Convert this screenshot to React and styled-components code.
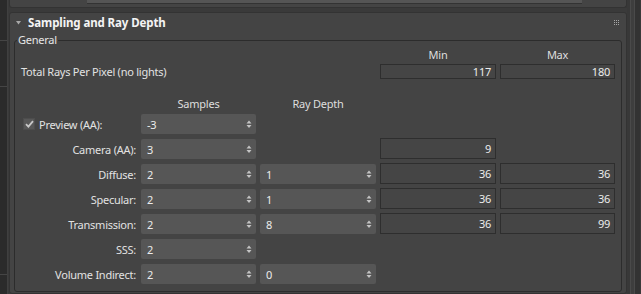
import React from "react";
import styled, { createGlobalStyle } from "styled-components";

const Global = createGlobalStyle`
  html, body { margin: 0; padding: 0; background: #3a3a3a; }
  body {
    font-family: "Noto Sans", "Open Sans", sans-serif;
    font-size: 11px;
    letter-spacing: -0.25px;
    color: #e2e2e2;
  }
  #root { width: 641px; height: 294px; }
`;

const Frame = styled.div`
  display: flex;
  width: 641px;
  height: 294px;
  overflow: hidden;
  background: #3a3a3a;
`;

const SideStrip = styled.div`
  flex: none;
  width: 7px;
  background: #2b2b2b;
  border-right: 1px solid #404040;
  display: flex;
  flex-direction: column;
`;

const SideTick = styled.div`
  height: 1px;
  margin-top: ${(p) => p.$gap}px;
  background: #454545;
`;

const Main = styled.div`
  flex: none;
  width: 618px;
  margin-left: 1px;
  display: flex;
  flex-direction: column;
  gap: 4px;
`;

const PrevRollout = styled.div`
  flex: none;
  height: 7px;
  background: #444444;
  border: 1px solid #333333;
  border-top: none;
  border-radius: 0 0 3px 3px;
`;

const PrevField = styled.div`
  margin-left: 77px;
  width: 495px;
  height: 3px;
  background: #555555;
  border-bottom: 1px solid #333333;
`;

const Rollout = styled.section`
  flex: 1;
  background: #444444;
  border: 1px solid #333333;
  border-radius: 3px;
`;

const RollHeader = styled.div`
  height: 19px;
  display: flex;
  align-items: center;
  padding-left: 6px;
  padding-right: 7px;
`;

const Title = styled.span`
  margin-left: 7px;
  font-weight: 700;
  font-size: 11.5px;
  letter-spacing: -0.1px;
  color: #f4f4f4;
`;

const Grip = styled.svg`
  margin-left: auto;
`;

const Group = styled.div`
  position: relative;
  margin: 8px 4px 0;
  border: 1px solid #2c2c2c;
  border-radius: 3px;
  padding: 7px 6px 7px 0;
`;

const Legend = styled.span`
  position: absolute;
  top: -8px;
  left: 2px;
  padding: 0 1px;
  line-height: 14px;
  background: #444444;
  color: #e6e6e6;
`;

const Grid = styled.div`
  display: grid;
  grid-template-columns: 122px 115px 116px 116px 115px;
  column-gap: 4px;
  grid-template-rows: ${(p) => p.$rows};
  row-gap: ${(p) => p.$rowGap}px;
  margin-top: ${(p) => p.$top || 0}px;
`;

const ColHead = styled.div`
  grid-column: ${(p) => p.$col};
  grid-row: 1;
  text-align: center;
  line-height: ${(p) => p.$lh || 14}px;
  color: #dedede;
`;

const WideLabel = styled.div`
  grid-column: 1 / 4;
  grid-row: 2;
  padding-left: 6px;
  line-height: 15px;
  white-space: nowrap;
`;

const RowLabel = styled.div`
  grid-column: 1;
  grid-row: ${(p) => p.$row};
  display: flex;
  align-items: center;
  justify-content: ${(p) => (p.$check ? "flex-start" : "flex-end")};
  padding-left: ${(p) => (p.$check ? 8 : 0)}px;
  padding-right: 1px;
  white-space: nowrap;
`;

const Check = styled.span`
  width: 12px;
  height: 12px;
  box-sizing: border-box;
  background: #575757;
  border: 1px solid #4d4d4d;
  margin-right: 4px;
  display: flex;
  align-items: center;
  justify-content: center;
`;

const Spinner = styled.div`
  grid-column: ${(p) => p.$col};
  grid-row: ${(p) => p.$row};
  display: flex;
  align-items: center;
  background: #565656;
  border-radius: 2px;
  padding: 0 4px 0 6px;
  color: #ececec;
`;

const SpinText = styled.span`
  flex: 1;
`;

const ValueBox = styled.div`
  grid-column: ${(p) => p.$col};
  grid-row: ${(p) => p.$row};
  box-sizing: border-box;
  height: ${(p) => p.$h}px;
  margin-top: ${(p) => p.$mt || 0}px;
  border: 1px solid #2e2e2e;
  background: #454545;
  text-align: right;
  padding-right: 4px;
  line-height: ${(p) => p.$h - 2}px;
  color: #ececec;
`;

const ScrollArea = styled.div`
  flex: none;
  width: 13px;
  display: flex;
  background: #333333;
`;

const ScrollLine = styled.div`
  width: ${(p) => p.$w}px;
  background: ${(p) => p.$c};
`;

const Arrows = () => (
  <svg width="6" height="9" viewBox="0 0 6 9">
    <polygon points="0.5,3.5 5.5,3.5 3,0.5" fill="#c4c4c4" />
    <polygon points="0.5,5 5.5,5 3,8" fill="#c4c4c4" />
  </svg>
);

const rows = [
  { label: "Preview (AA):", check: true, samples: "-3" },
  { label: "Camera (AA):", samples: "3", min: "9" },
  { label: "Diffuse:", samples: "2", depth: "1", min: "36", max: "36" },
  { label: "Specular:", samples: "2", depth: "1", min: "36", max: "36" },
  { label: "Transmission:", samples: "2", depth: "8", min: "36", max: "99" },
  { label: "SSS:", samples: "2" },
  { label: "Volume Indirect:", samples: "2", depth: "0" },
];

export default function App() {
  return (
    <>
      <Global />
      <Frame>
        <SideStrip>
          <SideTick $gap={40} />
          <SideTick $gap={45} />
          <SideTick $gap={187} />
        </SideStrip>
        <Main>
          <PrevRollout>
            <PrevField />
          </PrevRollout>
          <Rollout>
            <RollHeader>
              <svg width="5" height="4" viewBox="0 0 5 4">
                <polygon points="0,0 5,0 2.5,3.5" fill="#a8a8a8" />
              </svg>
              <Title>Sampling and Ray Depth</Title>
              <Grip width="5" height="5" viewBox="0 0 5 5" shapeRendering="crispEdges">
                {[0, 2, 4].map((y) =>
                  [0, 2, 4].map((x) => (
                    <rect key={`${x}-${y}`} x={x} y={y} width="1" height="1" fill="#a8a8a8" />
                  ))
                )}
              </Grip>
            </RollHeader>
            <Group>
              <Legend>General</Legend>
              <Grid $rows="14px 15px" $rowGap={2}>
                <ColHead $col={4}>Min</ColHead>
                <ColHead $col={5}>Max</ColHead>
                <WideLabel>Total Rays Per Pixel (no lights)</WideLabel>
                <ValueBox $col={4} $row={2} $h={15}>117</ValueBox>
                <ValueBox $col={5} $row={2} $h={15}>180</ValueBox>
              </Grid>
              <Grid $rows="11px repeat(7, 20px)" $rowGap={5} $top={19}>
                <ColHead $col={2} $lh={11}>Samples</ColHead>
                <ColHead $col={3} $lh={11}>Ray Depth</ColHead>
                {rows.map((r, i) => {
                  const row = i + 2;
                  return (
                    <React.Fragment key={r.label}>
                      <RowLabel $check={r.check} $row={row}>
                        {r.check && (
                          <Check>
                            <svg width="9" height="8" viewBox="0 0 9 8">
                              <path d="M1 4.2 L3.4 6.6 L8 1.2" stroke="#c8c8c8" strokeWidth="1.8" fill="none" />
                            </svg>
                          </Check>
                        )}
                        {r.label}
                      </RowLabel>
                      <Spinner $col={2} $row={row}>
                        <SpinText>{r.samples}</SpinText>
                        <Arrows />
                      </Spinner>
                      {r.depth && (
                        <Spinner $col={3} $row={row}>
                          <SpinText>{r.depth}</SpinText>
                          <Arrows />
                        </Spinner>
                      )}
                      {r.min && (
                        <ValueBox $col={4} $row={row} $h={21} $mt={-1}>{r.min}</ValueBox>
                      )}
                      {r.max && (
                        <ValueBox $col={5} $row={row} $h={21} $mt={-1}>{r.max}</ValueBox>
                      )}
                    </React.Fragment>
                  );
                })}
              </Grid>
            </Group>
          </Rollout>
        </Main>
        <ScrollArea>
          <ScrollLine $w={3} $c="#383838" />
          <ScrollLine $w={1} $c="#4a4a4a" />
          <ScrollLine $w={3} $c="#3e3e3e" />
          <ScrollLine $w={1} $c="#4a4a4a" />
        </ScrollArea>
      </Frame>
    </>
  );
}
